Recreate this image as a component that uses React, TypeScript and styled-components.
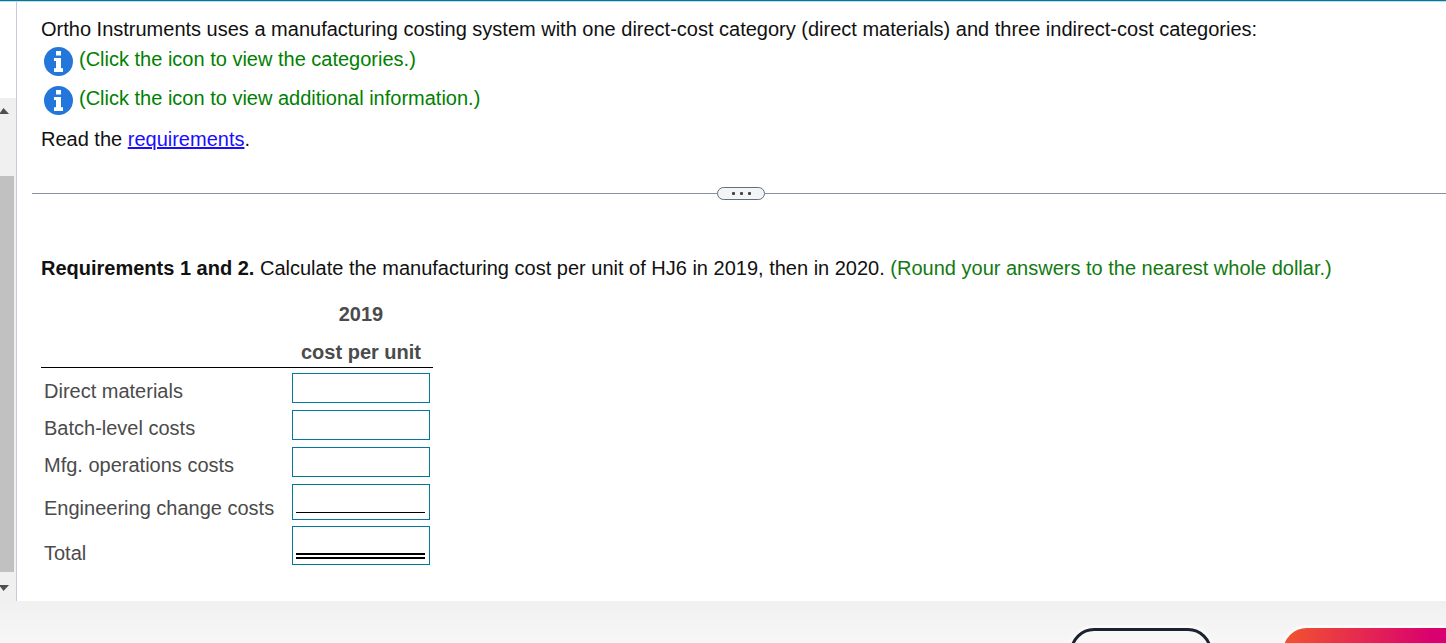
import React from "react";
import styled, { createGlobalStyle } from "styled-components";

const GlobalStyle = createGlobalStyle`
  *, *::before, *::after { box-sizing: border-box; }
  body {
    margin: 0;
    background: #f3f3f3;
    color: #111;
    font: 20px/24px "Liberation Sans", Arial, sans-serif;
  }
`;

const Page = styled.div`
  display: flex;
  flex-direction: column;
  height: 100vh;
  overflow: hidden;
  border-top: 1px solid #007a9b;
`;

const Workspace = styled.div`
  display: flex;
  flex: 1;
  min-height: 0;
  background: #fff;
  border-top: 1px solid #c5dbe6;
`;

const SideRail = styled.aside`
  display: flex;
  flex-direction: column;
  flex: 0 0 17px;
  padding-top: 96px;
  border-right: 1px solid #c5cbdd;
`;

const ScrollTrack = styled.div`
  display: flex;
  flex: 1;
  flex-direction: column;
  justify-content: space-between;
  padding: 10px 0;
  background: #f0f0f0;
`;

const ScrollThumb = styled.div`
  flex: 1;
  width: 14px;
  margin: 62px 0 13px;
  background: #c1c1c1;
`;

const Arrow = styled.svg`
  display: block;
  width: 9px;
  height: 6px;
  fill: #505050;
`;

const Main = styled.main`
  flex: 1;
  min-width: 0;
  padding: 15px 0 0 24px;
`;

const Line = styled.p`
  margin: 0;
`;

const InfoButton = styled.button`
  display: flex;
  gap: 6px;
  height: 30px;
  margin: 6px 0 9px;
  padding: 0 0 0 3px;
  border: 0;
  background: none;
  color: #008000;
  font: inherit;
  cursor: pointer;
`;

const InfoGlyph = styled.svg`
  width: 29px;
  height: 29px;
`;

const InfoList = styled.div`
  padding-bottom: 2px;
`;

const Link = styled.a`
  color: #1a0dff;
  text-decoration: underline;
`;

const Divider = styled.div`
  display: flex;
  align-items: center;
  height: 13px;
  margin: 36px 0 56px -9px;

  &::before,
  &::after {
    content: "";
    flex: 1;
    height: 1px;
    background: #8890a0;
  }

  &::before { flex: 0 1 685px; }
`;

const DividerHandle = styled.button`
  display: flex;
  align-items: center;
  justify-content: center;
  gap: 5px;
  width: 48px;
  height: 13px;
  padding: 0;
  border: 1px solid #5f6f80;
  border-radius: 7px;
  background: #f3f4f6;
`;

const Dot = styled.span`
  width: 3px;
  height: 3px;
  border-radius: 1px;
  background: #444;
`;

const Hint = styled.span`
  color: #117a11;
`;

const CostTable = styled.table`
  width: 392px;
  margin-top: 12px;
  border-collapse: separate;
  border-spacing: 0;
  table-layout: fixed;
  color: #4b4b4b;
`;

const LabelColumn = styled.col`
  width: 248px;
`;

const HeadCell = styled.th<{ $ruled?: boolean }>`
  height: 38px;
  padding: ${(p) => (p.$ruled ? "4px 0 3px" : "0 0 4px")};
  border-bottom: ${(p) => (p.$ruled ? "1px solid #000" : "0")};
  vertical-align: bottom;
`;

type Rule = "none" | "single" | "double";

const LabelCell = styled.th`
  padding: 3px 3px 4px;
  font-weight: normal;
  text-align: left;
  vertical-align: bottom;
  white-space: nowrap;
`;

const ValueCell = styled.td`
  padding: 3px 3px 4px;
`;

const CostRow = styled.tr<{ $rule: Rule }>`
  &:first-child > * { padding-top: 5px; }
  ${(p) => p.$rule !== "none" && "& > * { padding-bottom: 3px; }"}
`;

const frame = {
  none: { height: 30, bottom: 0, line: "0" },
  single: { height: 36, bottom: 6, line: "1px solid #000" },
  double: { height: 39, bottom: 5, line: "6px double #000" },
};

const InputFrame = styled.div<{ $rule: Rule }>`
  display: flex;
  height: ${(p) => frame[p.$rule].height}px;
  padding: 0 4px ${(p) => frame[p.$rule].bottom}px 3px;
  border: 1px solid #007a9b;
`;

const CostInput = styled.input<{ $rule: Rule }>`
  width: 100%;
  min-width: 0;
  padding: 0;
  border: 0;
  border-bottom: ${(p) => frame[p.$rule].line};
  background: transparent;
  font: inherit;
  text-align: right;
  outline: none;
`;

const Footer = styled.footer`
  display: flex;
  flex: 0 0 42px;
  justify-content: flex-end;
  gap: 71px;
  padding-top: 27px;
  overflow: hidden;
  background: linear-gradient(#f0f0f0, #f7f7f7);
`;

const FooterButton = styled.button<{ $primary?: boolean }>`
  flex: none;
  width: ${(p) => (p.$primary ? 190 : 142)}px;
  height: 48px;
  margin-right: ${(p) => (p.$primary ? -27 : 0)}px;
  border: ${(p) => (p.$primary ? "0" : "3px solid #1b2333")};
  border-radius: 24px;
  background: ${(p) => (p.$primary ? "linear-gradient(105deg, #f05032 5%, #d9006f 75%)" : "#f7f7f7")};
  box-shadow: 0 0 0 3px #fafafa;
`;

function InfoItem({ children }: { children: React.ReactNode }) {
  return (
    <InfoButton type="button">
      <InfoGlyph viewBox="0 0 29 29" aria-hidden="true">
        <circle cx="14.5" cy="14.5" r="14.5" fill="#2477da" />
        <path d="M12 4h5v4.5h-5zM10 11h7v10.3h2V25h-9v-3.7h2V14h-2z" fill="#fff" />
      </InfoGlyph>
      <span>{children}</span>
    </InfoButton>
  );
}

const costs: { id: string; label: string; rule: Rule }[] = [
  { id: "materials", label: "Direct materials", rule: "none" },
  { id: "batch", label: "Batch-level costs", rule: "none" },
  { id: "operations", label: "Mfg. operations costs", rule: "none" },
  { id: "engineering", label: "Engineering change costs", rule: "single" },
  { id: "total", label: "Total", rule: "double" },
];

export default function App() {
  return (
    <>
      <GlobalStyle />
      <Page>
        <Workspace>
          <SideRail>
            <ScrollTrack>
              <Arrow viewBox="0 0 9 6"><path d="M-1 6 3.5 0 9 6z" /></Arrow>
              <ScrollThumb />
              <Arrow viewBox="0 0 9 6"><path d="M-1 0 3.5 6 9 0z" /></Arrow>
            </ScrollTrack>
          </SideRail>
          <Main>
            <Line>
              Ortho Instruments uses a manufacturing costing system with one direct-cost category
              (direct materials) and three indirect-cost categories:
            </Line>
            <InfoList>
              <InfoItem>(Click the icon to view the categories.)</InfoItem>
              <InfoItem>(Click the icon to view additional information.)</InfoItem>
            </InfoList>
            <Line>
              Read the <Link href="#requirements">requirements</Link>.
            </Line>
            <Divider>
              <DividerHandle type="button" aria-label="Resize panels">
                <Dot /><Dot /><Dot />
              </DividerHandle>
            </Divider>
            <Line id="requirements">
              <b>Requirements 1 and 2.</b> Calculate the manufacturing cost per unit of HJ6 in 2019,
              then in 2020. <Hint>(Round your answers to the nearest whole dollar.)</Hint>
            </Line>
            <CostTable>
              <colgroup>
                <LabelColumn />
                <col />
              </colgroup>
              <thead>
                <tr>
                  <HeadCell />
                  <HeadCell scope="col">2019</HeadCell>
                </tr>
                <tr>
                  <HeadCell $ruled />
                  <HeadCell $ruled scope="col">cost per unit</HeadCell>
                </tr>
              </thead>
              <tbody>
                {costs.map(({ id, label, rule }) => (
                  <CostRow key={id} $rule={rule}>
                    <LabelCell scope="row">
                      <label htmlFor={id}>{label}</label>
                    </LabelCell>
                    <ValueCell>
                      <InputFrame $rule={rule}>
                        <CostInput id={id} type="text" inputMode="numeric" $rule={rule} />
                      </InputFrame>
                    </ValueCell>
                  </CostRow>
                ))}
              </tbody>
            </CostTable>
          </Main>
        </Workspace>
        <Footer>
          <FooterButton type="button" aria-label="Secondary action" />
          <FooterButton type="button" aria-label="Primary action" $primary />
        </Footer>
      </Page>
    </>
  );
}
